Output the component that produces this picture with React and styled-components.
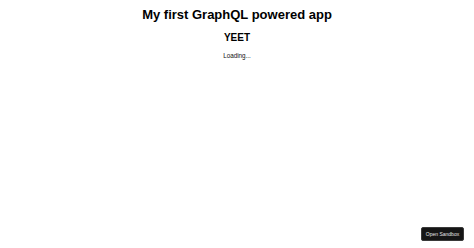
import React from 'react';
import styled, { createGlobalStyle } from 'styled-components';

const GlobalStyle = createGlobalStyle`
  html, body {
    margin: 0;
    padding: 0;
    background: #ffffff;
  }
  body {
    font-family: "Liberation Sans", Arial, Helvetica, sans-serif;
    color: #000000;
  }
`;

const Page = styled.div`
  display: flex;
  flex-direction: column;
  align-items: center;
  padding-top: 7px;
  text-align: center;
`;

const Title = styled.h1`
  margin: 0;
  font-size: 13px;
  line-height: 16px;
  font-weight: 700;
`;

const Subtitle = styled.h2`
  margin: 9px 0 0;
  font-size: 10px;
  line-height: 12px;
  font-weight: 700;
`;

const Status = styled.p`
  margin: 7.5px 0 0;
  font-size: 6.3px;
  line-height: 8px;
  color: #111;
`;

const SandboxButton = styled.a`
  position: fixed;
  right: 10px;
  bottom: 7px;
  display: flex;
  align-items: center;
  justify-content: center;
  width: 43px;
  height: 14px;
  box-sizing: border-box;
  border: 1px solid #3a3a3a;
  border-radius: 2px;
  background: #151515;
  color: #e6e6e6;
  font-size: 5px;
  text-decoration: none;
`;

export default function App() {
  return (
    <>
      <GlobalStyle />
      <Page>
        <Title>My first GraphQL powered app</Title>
        <Subtitle>YEET</Subtitle>
        <Status>Loading...</Status>
      </Page>
      <SandboxButton href="#">Open Sandbox</SandboxButton>
    </>
  );
}
